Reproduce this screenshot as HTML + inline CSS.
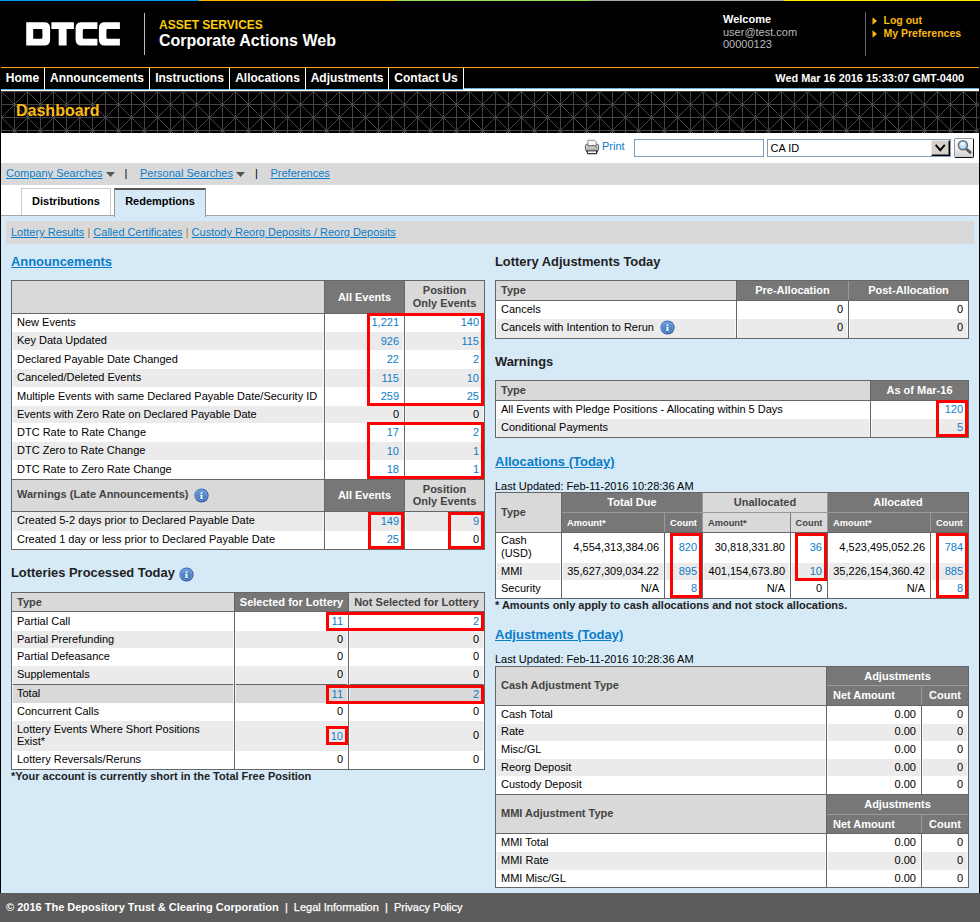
<!DOCTYPE html>
<html><head><meta charset="utf-8"><title>Dashboard</title>
<style>
html,body{margin:0;padding:0;}
body{width:980px;height:922px;position:relative;overflow:hidden;background:#000;font-family:"Liberation Sans",sans-serif;font-size:11px;color:#000;}
div{position:absolute;box-sizing:border-box;white-space:nowrap;}
.t{overflow:visible;}
.r{text-align:right;}
.c{text-align:center;}
.b{font-weight:bold;}
.lk{color:#0b7dc8;}
.ul{color:#0b7dc8;text-decoration:underline;}
.h13{font-size:13px;font-weight:bold;color:#222;}
.hd{font-weight:bold;color:#fff;}
.hl{font-weight:bold;color:#444;}
svg{position:absolute;left:0;top:0;display:block;}
</style></head><body>

<div style="left:1px;top:0px;width:978px;height:922px;background:#fff"></div>
<div style="left:0px;top:0px;width:980px;height:91px;background:#000"></div>
<div style="left:0px;top:0px;width:199px;height:1px;background:#00a0ea"></div>
<div style="left:199px;top:0px;width:197px;height:1px;background:#ffb400"></div>
<div style="left:396px;top:0px;width:194px;height:1px;background:#98df52"></div>
<div style="left:590px;top:0px;width:194px;height:1px;background:#a8a8a8"></div>
<div style="left:784px;top:0px;width:196px;height:1px;background:#ffec00"></div>
<div style="left:26px;top:22px;width:95px;height:24px"><svg width="95" height="24" viewBox="0 0 95 24">
<g fill="#fff">
<path d="M0.2 0.3H18.3Q24.1 0.3 24.1 6.1V17.7Q24.1 23.5 18.3 23.5H0.2Z M7.2 7V16.8H15.2Q16.4 16.8 16.4 15.6V8.2Q16.4 7 15.2 7Z" fill-rule="evenodd"/>
<path d="M25.4 0.3H47.9V7H40.6V23.5H32.7V7H25.4Z"/>
<path d="M71.4 0.3V7H58Q56.8 7 56.8 8.2V15.6Q56.8 16.8 58 16.8H71.4V23.5H55.4Q49.6 23.5 49.6 17.7V6.1Q49.6 0.3 55.4 0.3Z"/>
<path d="M93.9 0.3V7H81.6Q80.4 7 80.4 8.2V15.6Q80.4 16.8 81.6 16.8H93.9V23.5H78.7Q72.9 23.5 72.9 17.7V6.1Q72.9 0.3 78.7 0.3Z"/>
</g></svg></div>
<div style="left:144px;top:13px;width:1px;height:42px;background:#bbb"></div>
<div class="t" style="left:159px;top:18px;width:200px;height:14px;line-height:14px;font-size:12px;font-weight:bold;color:#fccd0a">ASSET SERVICES</div>
<div class="t" style="left:159px;top:31px;width:250px;height:20px;line-height:20px;font-size:16px;font-weight:bold;color:#fff">Corporate Actions Web</div>
<div class="t" style="left:723px;top:13px;width:150px;height:13px;line-height:13px;font-weight:bold;color:#fff;font-size:11px">Welcome</div>
<div class="t" style="left:723px;top:26px;width:150px;height:12px;line-height:12px;color:#bbb">user@test.com</div>
<div class="t" style="left:723px;top:38px;width:150px;height:12px;line-height:12px;color:#bbb">00000123</div>
<div style="left:865px;top:12px;width:1px;height:44px;background:#666"></div>
<div style="left:872px;top:17px;width:6px;height:8px"><svg width="6" height="8"><path d="M0.5 0.3L5 4L0.5 7.7z" fill="#fdb913"/></svg></div>
<div style="left:872px;top:30px;width:6px;height:8px"><svg width="6" height="8"><path d="M0.5 0.3L5 4L0.5 7.7z" fill="#fdb913"/></svg></div>
<div class="t" style="left:883.5px;top:14px;width:90px;height:12px;line-height:12px;font-size:10.5px;font-weight:bold;color:#fdb913">Log out</div>
<div class="t" style="left:883.5px;top:27px;width:90px;height:12px;line-height:12px;font-size:10.5px;font-weight:bold;color:#fdb913">My Preferences</div>
<div style="left:1px;top:67px;width:978px;height:1px;background:#f5a81c"></div>
<div style="left:1px;top:89px;width:463px;height:1px;background:#5eb0eb"></div>
<div style="left:1px;top:90px;width:978px;height:1px;background:#fff"></div>
<div style="left:464px;top:88px;width:515px;height:1px;background:#5eb0eb"></div>
<div style="left:464px;top:89px;width:515px;height:1px;background:#fff"></div>
<div class="t" style="left:1px;top:68px;width:43px;height:21px;line-height:21px;font-size:12px;font-weight:bold;color:#fff;text-align:center;line-height:20px">Home</div>
<div style="left:44px;top:68px;width:1px;height:22px;background:#fff"></div>
<div class="t" style="left:45px;top:68px;width:104px;height:21px;line-height:21px;font-size:12px;font-weight:bold;color:#fff;text-align:center;line-height:20px">Announcements</div>
<div style="left:149px;top:68px;width:1px;height:22px;background:#fff"></div>
<div class="t" style="left:150px;top:68px;width:79px;height:21px;line-height:21px;font-size:12px;font-weight:bold;color:#fff;text-align:center;line-height:20px">Instructions</div>
<div style="left:229px;top:68px;width:1px;height:22px;background:#fff"></div>
<div class="t" style="left:230px;top:68px;width:75px;height:21px;line-height:21px;font-size:12px;font-weight:bold;color:#fff;text-align:center;line-height:20px">Allocations</div>
<div style="left:305px;top:68px;width:1px;height:22px;background:#fff"></div>
<div class="t" style="left:306px;top:68px;width:82px;height:21px;line-height:21px;font-size:12px;font-weight:bold;color:#fff;text-align:center;line-height:20px">Adjustments</div>
<div style="left:388px;top:68px;width:1px;height:22px;background:#fff"></div>
<div class="t" style="left:389px;top:68px;width:74px;height:21px;line-height:21px;font-size:12px;font-weight:bold;color:#fff;text-align:center;line-height:20px">Contact Us</div>
<div style="left:463px;top:68px;width:1px;height:22px;background:#fff"></div>
<div class="t" style="left:700px;top:68px;width:264px;height:21px;line-height:21px;font-size:10.9px;font-weight:bold;color:#fff;text-align:right;line-height:20px">Wed Mar 16 2016 15:33:07 GMT-0400</div>
<div style="left:1px;top:91px;width:978px;height:42px;background:#000;overflow:hidden"><svg width="978" height="42"><path d="M0 0.5H978 M0 13.5H978 M0 26.5H978 M0 39.5H978 M0.5 0V42 M13.5 0V42 M26.5 0V42 M39.5 0V42 M52.5 0V42 M65.5 0V42 M78.5 0V42 M91.5 0V42 M104.5 0V42 M117.5 0V42 M130.5 0V42 M143.5 0V42 M156.5 0V42 M169.5 0V42 M182.5 0V42 M195.5 0V42 M208.5 0V42 M221.5 0V42 M234.5 0V42 M247.5 0V42 M260.5 0V42 M273.5 0V42 M286.5 0V42 M299.5 0V42 M312.5 0V42 M325.5 0V42 M338.5 0V42 M351.5 0V42 M364.5 0V42 M377.5 0V42 M390.5 0V42 M403.5 0V42 M416.5 0V42 M429.5 0V42 M442.5 0V42 M455.5 0V42 M468.5 0V42 M481.5 0V42 M494.5 0V42 M507.5 0V42 M520.5 0V42 M533.5 0V42 M546.5 0V42 M559.5 0V42 M572.5 0V42 M585.5 0V42 M598.5 0V42 M611.5 0V42 M624.5 0V42 M637.5 0V42 M650.5 0V42 M663.5 0V42 M676.5 0V42 M689.5 0V42 M702.5 0V42 M715.5 0V42 M728.5 0V42 M741.5 0V42 M754.5 0V42 M767.5 0V42 M780.5 0V42 M793.5 0V42 M806.5 0V42 M819.5 0V42 M832.5 0V42 M845.5 0V42 M858.5 0V42 M871.5 0V42 M884.5 0V42 M897.5 0V42 M910.5 0V42 M923.5 0V42 M936.5 0V42 M949.5 0V42 M962.5 0V42 M975.5 0V42 M-78 0L-36 42 M-51 0L-93 42 M-52 0L-10 42 M-25 0L-67 42 M-26 0L16 42 M1 0L-41 42 M0 0L42 42 M27 0L-15 42 M26 0L68 42 M53 0L11 42 M52 0L94 42 M79 0L37 42 M78 0L120 42 M105 0L63 42 M104 0L146 42 M131 0L89 42 M130 0L172 42 M157 0L115 42 M156 0L198 42 M183 0L141 42 M182 0L224 42 M209 0L167 42 M208 0L250 42 M235 0L193 42 M234 0L276 42 M261 0L219 42 M260 0L302 42 M287 0L245 42 M286 0L328 42 M313 0L271 42 M312 0L354 42 M339 0L297 42 M338 0L380 42 M365 0L323 42 M364 0L406 42 M391 0L349 42 M390 0L432 42 M417 0L375 42 M416 0L458 42 M443 0L401 42 M442 0L484 42 M469 0L427 42 M468 0L510 42 M495 0L453 42 M494 0L536 42 M521 0L479 42 M520 0L562 42 M547 0L505 42 M546 0L588 42 M573 0L531 42 M572 0L614 42 M599 0L557 42 M598 0L640 42 M625 0L583 42 M624 0L666 42 M651 0L609 42 M650 0L692 42 M677 0L635 42 M676 0L718 42 M703 0L661 42 M702 0L744 42 M729 0L687 42 M728 0L770 42 M755 0L713 42 M754 0L796 42 M781 0L739 42 M780 0L822 42 M807 0L765 42 M806 0L848 42 M833 0L791 42 M832 0L874 42 M859 0L817 42 M858 0L900 42 M885 0L843 42 M884 0L926 42 M911 0L869 42 M910 0L952 42 M937 0L895 42 M936 0L978 42 M963 0L921 42 M962 0L1004 42 M989 0L947 42 M988 0L1030 42 M1015 0L973 42 M1014 0L1056 42 M1041 0L999 42" stroke="#454545" stroke-width="1" fill="none"/></svg></div>
<div class="t" style="left:16px;top:101px;width:200px;height:20px;line-height:20px;font-size:16px;font-weight:bold;color:#fdb913">Dashboard</div>
<div style="left:584px;top:139px;width:16px;height:16px"><svg width="16" height="16" viewBox="0 0 16 16">
<defs><linearGradient id="pg" x1="0" y1="0" x2="0" y2="1"><stop offset="0" stop-color="#e4e4e4"/><stop offset="0.7" stop-color="#bdbdbd"/><stop offset="1" stop-color="#8e8e8e"/></linearGradient></defs>
<path d="M2.4 11.6L3.7 14.8H12.5L13.8 11.6Z" fill="#1c1c1c" stroke="#1c1c1c" stroke-width="0.8" stroke-linejoin="round"/>
<rect x="3.9" y="12.2" width="8.2" height="1.8" fill="#fff"/>
<rect x="1.4" y="5.2" width="13.2" height="6.6" rx="1.6" fill="url(#pg)" stroke="#5a5a5a" stroke-width="1"/>
<path d="M3.9 6.6V1.3H10.9L12.2 2.6V6.6Z" fill="#fff" stroke="#808080" stroke-width="0.9"/>
<path d="M3.4 6.8H12.7" stroke="#6a6a6a" stroke-width="0.9"/>
<circle cx="12.4" cy="8.5" r="0.75" fill="#1fa35a"/>
</svg></div>
<div class="t" style="left:602px;top:139px;width:30px;height:14px;line-height:14px;color:#0b7dc8">Print</div>
<div style="left:634px;top:139px;width:130px;height:18px;background:#fff;border:1px solid #7f9db9"></div>
<div style="left:767px;top:139px;width:184px;height:18px;background:#fff;border:1px solid #7f9db9"></div>
<div class="t" style="left:770.5px;top:140px;width:100px;height:16px;line-height:16px;font-size:11px">CA ID</div>
<div style="left:931px;top:140px;width:19px;height:16px;background:#d6d2ca;border:1px solid #000;border-top-color:#ece9e2;border-left-color:#ece9e2;box-shadow:inset -1px -1px 0 #6e6e6e"><svg width="17" height="14"><path d="M3.7 3.9L8.2 9.2L12.8 3.9" stroke="#000" stroke-width="1.9" fill="none"/></svg></div>
<div style="left:954px;top:138px;width:20px;height:20px;background:linear-gradient(#ffffff,#f2f2f2 45%,#cfcfcf);border:1px solid #111;border-top-color:#9a9a9a;border-left-color:#9a9a9a;border-radius:2px"><svg width="18" height="18" viewBox="0 0 18 18">
<defs><radialGradient id="lg" cx="0.45" cy="0.35" r="0.7"><stop offset="0" stop-color="#ffffff"/><stop offset="0.45" stop-color="#bfe0ff"/><stop offset="1" stop-color="#8fc4f5"/></radialGradient></defs>
<line x1="11.6" y1="10.2" x2="15.2" y2="13.4" stroke="#555" stroke-width="2.8" stroke-linecap="round"/>
<circle cx="7.9" cy="6.3" r="4.5" fill="url(#lg)" stroke="#6a6a6a" stroke-width="1.5"/></svg></div>
<div style="left:1px;top:163px;width:978px;height:22px;background:#d9d9d9"></div>
<div class="t" style="left:6px;top:166px;width:100px;height:14px;line-height:14px;"><span class="ul">Company Searches</span></div>
<div style="left:106px;top:172px;width:10px;height:6px"><svg width="10" height="6"><path d="M0 0H9L4.5 5z" fill="#555"/></svg></div>
<div class="t" style="left:124.5px;top:166px;width:10px;height:14px;line-height:14px;">|</div>
<div class="t" style="left:140px;top:166px;width:100px;height:14px;line-height:14px;"><span class="ul">Personal Searches</span></div>
<div style="left:236px;top:172px;width:10px;height:6px"><svg width="10" height="6"><path d="M0 0H9L4.5 5z" fill="#555"/></svg></div>
<div class="t" style="left:255px;top:166px;width:10px;height:14px;line-height:14px;">|</div>
<div class="t" style="left:270.5px;top:166px;width:100px;height:14px;line-height:14px;"><span class="ul">Preferences</span></div>
<div style="left:1px;top:215px;width:978px;height:678px;background:#d5e9f7;border-top:1px solid #a6a6a6"></div>
<div style="left:21px;top:188px;width:90px;height:27px;background:#fff;border:1px solid #ccc;border-bottom:none"></div>
<div class="t" style="left:21px;top:188px;width:90px;height:27px;line-height:27px;font-weight:bold;text-align:center">Distributions</div>
<div style="left:114px;top:188px;width:92px;height:29px;background:#d5e9f7;border:1px solid #999;border-top:2px solid #555;border-bottom:none"></div>
<div class="t" style="left:114px;top:188px;width:92px;height:27px;line-height:27px;font-weight:bold;text-align:center">Redemptions</div>
<div style="left:6px;top:221px;width:968px;height:23px;background:#d9d9d9"></div>
<div class="t" style="left:11px;top:225px;width:600px;height:14px;line-height:14px;"><span class="ul">Lottery Results</span> <span style="color:#a67c2e">|</span> <span class="ul">Called Certificates</span> <span style="color:#a67c2e">|</span> <span class="ul">Custody Reorg Deposits / Reorg Deposits</span></div>
<div class="t" style="left:11px;top:254px;width:200px;height:16px;line-height:16px;"><span class="ul" style="font-size:12.9px;font-weight:bold">Announcements</span></div>
<div style="left:11px;top:280px;width:474px;height:270px;border:1px solid #666666;background:#fff"></div>
<div style="left:12px;top:281px;width:312px;height:32px;background:#d9d9d9"></div>
<div style="left:325px;top:281px;width:79px;height:32px;background:#777777"></div>
<div style="left:405px;top:281px;width:79px;height:32px;background:#d9d9d9"></div>
<div style="left:12px;top:313px;width:472px;height:1px;background:#666666"></div>
<div class="t" style="left:325px;top:281px;width:79px;height:32px;line-height:32px;text-align:center;font-weight:bold;color:#fff;">All Events</div>
<div class="t" style="left:405px;top:284px;width:79px;height:13px;line-height:13px;text-align:center;font-weight:bold;color:#444;">Position</div>
<div class="t" style="left:405px;top:297px;width:79px;height:13px;line-height:13px;text-align:center;font-weight:bold;color:#444;">Only Events</div>
<div class="t" style="left:17px;top:313px;width:307px;height:18px;line-height:18px;">New Events</div>
<div class="t" style="left:325px;top:313px;width:74px;height:18px;line-height:18px;text-align:right;"><span class="lk">1,221</span></div>
<div class="t" style="left:405px;top:313px;width:74px;height:18px;line-height:18px;text-align:right;"><span class="lk">140</span></div>
<div style="left:12px;top:332px;width:472px;height:18px;background:#ebebeb"></div>
<div class="t" style="left:17px;top:331px;width:307px;height:18px;line-height:18px;">Key Data Updated</div>
<div class="t" style="left:325px;top:332px;width:74px;height:18px;line-height:18px;text-align:right;"><span class="lk">926</span></div>
<div class="t" style="left:405px;top:332px;width:74px;height:18px;line-height:18px;text-align:right;"><span class="lk">115</span></div>
<div class="t" style="left:17px;top:350px;width:307px;height:18px;line-height:18px;">Declared Payable Date Changed</div>
<div class="t" style="left:325px;top:350px;width:74px;height:18px;line-height:18px;text-align:right;"><span class="lk">22</span></div>
<div class="t" style="left:405px;top:350px;width:74px;height:18px;line-height:18px;text-align:right;"><span class="lk">2</span></div>
<div style="left:12px;top:369px;width:472px;height:18px;background:#ebebeb"></div>
<div class="t" style="left:17px;top:368px;width:307px;height:18px;line-height:18px;">Canceled/Deleted Events</div>
<div class="t" style="left:325px;top:369px;width:74px;height:18px;line-height:18px;text-align:right;"><span class="lk">115</span></div>
<div class="t" style="left:405px;top:369px;width:74px;height:18px;line-height:18px;text-align:right;"><span class="lk">10</span></div>
<div class="t" style="left:17px;top:387px;width:307px;height:18px;line-height:18px;">Multiple Events with same Declared Payable Date/Security ID</div>
<div class="t" style="left:325px;top:387px;width:74px;height:18px;line-height:18px;text-align:right;"><span class="lk">259</span></div>
<div class="t" style="left:405px;top:387px;width:74px;height:18px;line-height:18px;text-align:right;"><span class="lk">25</span></div>
<div style="left:12px;top:406px;width:472px;height:17px;background:#ebebeb"></div>
<div class="t" style="left:17px;top:405px;width:307px;height:18px;line-height:18px;">Events with Zero Rate on Declared Payable Date</div>
<div class="t" style="left:325px;top:405px;width:74px;height:18px;line-height:18px;text-align:right;">0</div>
<div class="t" style="left:405px;top:405px;width:74px;height:18px;line-height:18px;text-align:right;">0</div>
<div class="t" style="left:17px;top:423px;width:307px;height:18px;line-height:18px;">DTC Rate to Rate Change</div>
<div class="t" style="left:325px;top:423px;width:74px;height:18px;line-height:18px;text-align:right;"><span class="lk">17</span></div>
<div class="t" style="left:405px;top:423px;width:74px;height:18px;line-height:18px;text-align:right;"><span class="lk">2</span></div>
<div style="left:12px;top:442px;width:472px;height:18px;background:#ebebeb"></div>
<div class="t" style="left:17px;top:441px;width:307px;height:18px;line-height:18px;">DTC Zero to Rate Change</div>
<div class="t" style="left:325px;top:442px;width:74px;height:18px;line-height:18px;text-align:right;"><span class="lk">10</span></div>
<div class="t" style="left:405px;top:442px;width:74px;height:18px;line-height:18px;text-align:right;"><span class="lk">1</span></div>
<div class="t" style="left:17px;top:460px;width:307px;height:18px;line-height:18px;">DTC Rate to Zero Rate Change</div>
<div class="t" style="left:325px;top:460px;width:74px;height:18px;line-height:18px;text-align:right;"><span class="lk">18</span></div>
<div class="t" style="left:405px;top:460px;width:74px;height:18px;line-height:18px;text-align:right;"><span class="lk">1</span></div>
<div style="left:12px;top:479px;width:312px;height:32px;background:#d9d9d9"></div>
<div style="left:325px;top:479px;width:79px;height:32px;background:#777777"></div>
<div style="left:405px;top:479px;width:79px;height:32px;background:#d9d9d9"></div>
<div style="left:12px;top:479px;width:472px;height:1px;background:#666666"></div>
<div style="left:12px;top:511px;width:472px;height:1px;background:#666666"></div>
<div class="t" style="left:17px;top:478px;width:307px;height:32px;line-height:32px;font-weight:bold;color:#444;">Warnings (Late Announcements)</div>
<div style="left:194.1px;top:488.4px;width:15px;height:15px"><svg class="info" width="15" height="15" viewBox="0 0 15 15"><defs><linearGradient id="ig1" x1="0" y1="0" x2="1" y2="1"><stop offset="0" stop-color="#3f7bd0"/><stop offset="1" stop-color="#1c3a8c"/></linearGradient><linearGradient id="ig2" x1="0" y1="0" x2="0" y2="1"><stop offset="0" stop-color="#6d9bd3"/><stop offset="1" stop-color="#3c72bb"/></linearGradient></defs><circle cx="7.5" cy="7.5" r="7.1" fill="url(#ig1)"/><circle cx="7.5" cy="7.5" r="6.1" fill="#8db1de"/><circle cx="7.5" cy="7.5" r="5.4" fill="url(#ig2)"/><path d="M6.6 4.3h1.8v1.5H6.6z M6.1 6.7h2.3v3.2h0.9v0.9H5.7v-0.9h0.9V7.5H6.1z" fill="#fff"/></svg></div>
<div class="t" style="left:325px;top:480px;width:79px;height:31px;line-height:31px;text-align:center;font-weight:bold;color:#fff;">All Events</div>
<div class="t" style="left:405px;top:483px;width:79px;height:13px;line-height:13px;text-align:center;font-weight:bold;color:#444;">Position</div>
<div class="t" style="left:405px;top:495px;width:79px;height:13px;line-height:13px;text-align:center;font-weight:bold;color:#444;">Only Events</div>
<div style="left:12px;top:512px;width:472px;height:19px;background:#ebebeb"></div>
<div class="t" style="left:17px;top:511px;width:307px;height:19px;line-height:19px;">Created 5-2 days prior to Declared Payable Date</div>
<div class="t" style="left:17px;top:530px;width:307px;height:18px;line-height:18px;">Created 1 day or less prior to Declared Payable Date</div>
<div class="t" style="left:325px;top:512px;width:74px;height:19px;line-height:19px;text-align:right;"><span class="lk">149</span></div>
<div class="t" style="left:405px;top:512px;width:74px;height:19px;line-height:19px;text-align:right;"><span class="lk">9</span></div>
<div class="t" style="left:325px;top:530px;width:74px;height:18px;line-height:18px;text-align:right;"><span class="lk">25</span></div>
<div class="t" style="left:405px;top:530px;width:74px;height:18px;line-height:18px;text-align:right;">0</div>
<div style="left:12px;top:314px;width:1px;height:165px;background:rgba(255,255,255,0.6)"></div>
<div style="left:323px;top:314px;width:1px;height:165px;background:rgba(255,255,255,0.6)"></div>
<div style="left:325px;top:314px;width:1px;height:165px;background:rgba(255,255,255,0.6)"></div>
<div style="left:403px;top:314px;width:1px;height:165px;background:rgba(255,255,255,0.6)"></div>
<div style="left:405px;top:314px;width:1px;height:165px;background:rgba(255,255,255,0.6)"></div>
<div style="left:483px;top:314px;width:1px;height:165px;background:rgba(255,255,255,0.6)"></div>
<div style="left:12px;top:512px;width:1px;height:37px;background:rgba(255,255,255,0.6)"></div>
<div style="left:323px;top:512px;width:1px;height:37px;background:rgba(255,255,255,0.6)"></div>
<div style="left:325px;top:512px;width:1px;height:37px;background:rgba(255,255,255,0.6)"></div>
<div style="left:403px;top:512px;width:1px;height:37px;background:rgba(255,255,255,0.6)"></div>
<div style="left:405px;top:512px;width:1px;height:37px;background:rgba(255,255,255,0.6)"></div>
<div style="left:483px;top:512px;width:1px;height:37px;background:rgba(255,255,255,0.6)"></div>
<div style="left:324px;top:281px;width:1px;height:268px;background:#666666"></div>
<div style="left:404px;top:281px;width:1px;height:268px;background:#666666"></div>
<div style="left:367px;top:313px;width:117px;height:93px;border:3px solid #fe0000"></div>
<div style="left:367px;top:422px;width:117px;height:57px;border:3px solid #fe0000"></div>
<div style="left:368px;top:512px;width:36px;height:37px;border:3px solid #fe0000"></div>
<div style="left:448px;top:512px;width:36px;height:37px;border:3px solid #fe0000"></div>
<div class="t" style="left:11px;top:565px;width:250px;height:16px;line-height:16px;font-size:12.9px;font-weight:bold;color:#222">Lotteries Processed Today</div>
<div style="left:178.6px;top:566.6px;width:15px;height:15px"><svg class="info" width="15" height="15" viewBox="0 0 15 15"><defs><linearGradient id="ig1" x1="0" y1="0" x2="1" y2="1"><stop offset="0" stop-color="#3f7bd0"/><stop offset="1" stop-color="#1c3a8c"/></linearGradient><linearGradient id="ig2" x1="0" y1="0" x2="0" y2="1"><stop offset="0" stop-color="#6d9bd3"/><stop offset="1" stop-color="#3c72bb"/></linearGradient></defs><circle cx="7.5" cy="7.5" r="7.1" fill="url(#ig1)"/><circle cx="7.5" cy="7.5" r="6.1" fill="#8db1de"/><circle cx="7.5" cy="7.5" r="5.4" fill="url(#ig2)"/><path d="M6.6 4.3h1.8v1.5H6.6z M6.1 6.7h2.3v3.2h0.9v0.9H5.7v-0.9h0.9V7.5H6.1z" fill="#fff"/></svg></div>
<div style="left:11px;top:592px;width:474px;height:178px;border:1px solid #666666;background:#fff"></div>
<div style="left:12px;top:593px;width:222px;height:18px;background:#d9d9d9"></div>
<div style="left:235px;top:593px;width:113px;height:18px;background:#777777"></div>
<div style="left:349px;top:593px;width:135px;height:18px;background:#d9d9d9"></div>
<div style="left:12px;top:611px;width:472px;height:1px;background:#666666"></div>
<div class="t" style="left:17px;top:593px;width:217px;height:18px;line-height:18px;font-weight:bold;color:#444;">Type</div>
<div class="t" style="left:235px;top:593px;width:113px;height:18px;line-height:18px;text-align:center;font-weight:bold;color:#fff;">Selected for Lottery</div>
<div class="t" style="left:349px;top:593px;width:135px;height:18px;line-height:18px;text-align:center;font-weight:bold;color:#444;">Not Selected for Lottery</div>
<div class="t" style="left:17px;top:612px;width:217px;height:19px;line-height:19px;">Partial Call</div>
<div class="t" style="left:235px;top:612px;width:108px;height:19px;line-height:19px;text-align:right;"><span class="lk">11</span></div>
<div class="t" style="left:349px;top:612px;width:130px;height:19px;line-height:19px;text-align:right;"><span class="lk">2</span></div>
<div style="left:12px;top:631px;width:472px;height:17px;background:#ebebeb"></div>
<div class="t" style="left:17px;top:631px;width:217px;height:17px;line-height:17px;">Partial Prerefunding</div>
<div class="t" style="left:235px;top:631px;width:108px;height:17px;line-height:17px;text-align:right;">0</div>
<div class="t" style="left:349px;top:631px;width:130px;height:17px;line-height:17px;text-align:right;">0</div>
<div class="t" style="left:17px;top:647px;width:217px;height:18px;line-height:18px;">Partial Defeasance</div>
<div class="t" style="left:235px;top:647px;width:108px;height:18px;line-height:18px;text-align:right;">0</div>
<div class="t" style="left:349px;top:647px;width:130px;height:18px;line-height:18px;text-align:right;">0</div>
<div style="left:12px;top:666px;width:472px;height:19px;background:#ebebeb"></div>
<div class="t" style="left:17px;top:665px;width:217px;height:19px;line-height:19px;">Supplementals</div>
<div class="t" style="left:235px;top:665px;width:108px;height:19px;line-height:19px;text-align:right;">0</div>
<div class="t" style="left:349px;top:665px;width:130px;height:19px;line-height:19px;text-align:right;">0</div>
<div style="left:12px;top:685px;width:472px;height:18px;background:#d9d9d9"></div>
<div style="left:12px;top:684px;width:472px;height:1px;background:#666666"></div>
<div class="t" style="left:17px;top:684px;width:217px;height:19px;line-height:19px;">Total</div>
<div class="t" style="left:235px;top:685px;width:108px;height:19px;line-height:19px;text-align:right;"><span class="lk">11</span></div>
<div class="t" style="left:349px;top:685px;width:130px;height:19px;line-height:19px;text-align:right;"><span class="lk">2</span></div>
<div class="t" style="left:17px;top:703px;width:217px;height:17px;line-height:17px;">Concurrent Calls</div>
<div class="t" style="left:235px;top:703px;width:108px;height:17px;line-height:17px;text-align:right;">0</div>
<div class="t" style="left:349px;top:703px;width:130px;height:17px;line-height:17px;text-align:right;">0</div>
<div style="left:12px;top:721px;width:472px;height:30px;background:#ebebeb"></div>
<div class="t" style="left:17px;top:723px;width:220px;height:13px;line-height:13px;">Lottery Events Where Short Positions</div>
<div class="t" style="left:17px;top:735px;width:220px;height:13px;line-height:13px;">Exist*</div>
<div class="t" style="left:235px;top:721px;width:108px;height:30px;line-height:30px;text-align:right;"><span class="lk">10</span></div>
<div class="t" style="left:349px;top:720px;width:130px;height:30px;line-height:30px;text-align:right;">0</div>
<div class="t" style="left:17px;top:750px;width:217px;height:18px;line-height:18px;">Lottery Reversals/Reruns</div>
<div class="t" style="left:235px;top:750px;width:108px;height:18px;line-height:18px;text-align:right;">0</div>
<div class="t" style="left:349px;top:750px;width:130px;height:18px;line-height:18px;text-align:right;">0</div>
<div style="left:12px;top:612px;width:1px;height:157px;background:rgba(255,255,255,0.6)"></div>
<div style="left:233px;top:612px;width:1px;height:157px;background:rgba(255,255,255,0.6)"></div>
<div style="left:235px;top:612px;width:1px;height:157px;background:rgba(255,255,255,0.6)"></div>
<div style="left:347px;top:612px;width:1px;height:157px;background:rgba(255,255,255,0.6)"></div>
<div style="left:349px;top:612px;width:1px;height:157px;background:rgba(255,255,255,0.6)"></div>
<div style="left:483px;top:612px;width:1px;height:157px;background:rgba(255,255,255,0.6)"></div>
<div style="left:234px;top:593px;width:1px;height:176px;background:#666666"></div>
<div style="left:348px;top:593px;width:1px;height:176px;background:#666666"></div>
<div style="left:326px;top:612px;width:158px;height:19px;border:3px solid #fe0000"></div>
<div style="left:326px;top:685px;width:158px;height:19px;border:3px solid #fe0000"></div>
<div style="left:326px;top:726px;width:22px;height:19px;border:3px solid #fe0000"></div>
<div class="t" style="left:11px;top:769px;width:400px;height:14px;line-height:14px;font-weight:bold;color:#222">*Your account is currently short in the Total Free Position</div>
<div class="t" style="left:495px;top:254px;width:250px;height:16px;line-height:16px;font-size:12.9px;font-weight:bold;color:#222">Lottery Adjustments Today</div>
<div style="left:495px;top:280px;width:474px;height:59px;border:1px solid #666666;background:#fff"></div>
<div style="left:496px;top:281px;width:240px;height:19px;background:#d9d9d9"></div>
<div style="left:737px;top:281px;width:231px;height:19px;background:#777777"></div>
<div style="left:496px;top:300px;width:472px;height:1px;background:#666666"></div>
<div style="left:848px;top:281px;width:1px;height:19px;background:#999"></div>
<div class="t" style="left:501px;top:281px;width:235px;height:19px;line-height:19px;font-weight:bold;color:#444;">Type</div>
<div class="t" style="left:737px;top:281px;width:111px;height:19px;line-height:19px;text-align:center;font-weight:bold;color:#fff;">Pre-Allocation</div>
<div class="t" style="left:849px;top:281px;width:119px;height:19px;line-height:19px;text-align:center;font-weight:bold;color:#fff;">Post-Allocation</div>
<div style="left:496px;top:319px;width:472px;height:19px;background:#ebebeb"></div>
<div class="t" style="left:501px;top:300px;width:235px;height:18px;line-height:18px;">Cancels</div>
<div class="t" style="left:501px;top:318px;width:235px;height:19px;line-height:19px;">Cancels with Intention to Rerun</div>
<div style="left:659.5px;top:320.4px;width:15px;height:15px"><svg class="info" width="15" height="15" viewBox="0 0 15 15"><defs><linearGradient id="ig1" x1="0" y1="0" x2="1" y2="1"><stop offset="0" stop-color="#3f7bd0"/><stop offset="1" stop-color="#1c3a8c"/></linearGradient><linearGradient id="ig2" x1="0" y1="0" x2="0" y2="1"><stop offset="0" stop-color="#6d9bd3"/><stop offset="1" stop-color="#3c72bb"/></linearGradient></defs><circle cx="7.5" cy="7.5" r="7.1" fill="url(#ig1)"/><circle cx="7.5" cy="7.5" r="6.1" fill="#8db1de"/><circle cx="7.5" cy="7.5" r="5.4" fill="url(#ig2)"/><path d="M6.6 4.3h1.8v1.5H6.6z M6.1 6.7h2.3v3.2h0.9v0.9H5.7v-0.9h0.9V7.5H6.1z" fill="#fff"/></svg></div>
<div class="t" style="left:737px;top:300px;width:106px;height:18px;line-height:18px;text-align:right;">0</div>
<div class="t" style="left:849px;top:300px;width:114px;height:18px;line-height:18px;text-align:right;">0</div>
<div class="t" style="left:737px;top:318px;width:106px;height:19px;line-height:19px;text-align:right;">0</div>
<div class="t" style="left:849px;top:318px;width:114px;height:19px;line-height:19px;text-align:right;">0</div>
<div style="left:496px;top:301px;width:1px;height:37px;background:rgba(255,255,255,0.6)"></div>
<div style="left:735px;top:301px;width:1px;height:37px;background:rgba(255,255,255,0.6)"></div>
<div style="left:737px;top:301px;width:1px;height:37px;background:rgba(255,255,255,0.6)"></div>
<div style="left:847px;top:301px;width:1px;height:37px;background:rgba(255,255,255,0.6)"></div>
<div style="left:849px;top:301px;width:1px;height:37px;background:rgba(255,255,255,0.6)"></div>
<div style="left:967px;top:301px;width:1px;height:37px;background:rgba(255,255,255,0.6)"></div>
<div style="left:736px;top:281px;width:1px;height:57px;background:#666666"></div>
<div style="left:848px;top:301px;width:1px;height:37px;background:#666666"></div>
<div class="t" style="left:495px;top:354px;width:250px;height:16px;line-height:16px;font-size:12.9px;font-weight:bold;color:#222">Warnings</div>
<div style="left:495px;top:380px;width:474px;height:58px;border:1px solid #666666;background:#fff"></div>
<div style="left:496px;top:381px;width:374px;height:19px;background:#d9d9d9"></div>
<div style="left:871px;top:381px;width:97px;height:19px;background:#777777"></div>
<div style="left:496px;top:400px;width:472px;height:1px;background:#666666"></div>
<div class="t" style="left:501px;top:381px;width:369px;height:19px;line-height:19px;font-weight:bold;color:#444;">Type</div>
<div class="t" style="left:871px;top:381px;width:97px;height:19px;line-height:19px;text-align:center;font-weight:bold;color:#fff;">As of Mar-16</div>
<div style="left:496px;top:419px;width:472px;height:18px;background:#ebebeb"></div>
<div class="t" style="left:501px;top:400px;width:369px;height:18px;line-height:18px;">All Events with Pledge Positions - Allocating within 5 Days</div>
<div class="t" style="left:501px;top:418px;width:369px;height:18px;line-height:18px;">Conditional Payments</div>
<div class="t" style="left:871px;top:400px;width:92px;height:18px;line-height:18px;text-align:right;"><span class="lk">120</span></div>
<div class="t" style="left:871px;top:418px;width:92px;height:18px;line-height:18px;text-align:right;"><span class="lk">5</span></div>
<div style="left:496px;top:401px;width:1px;height:36px;background:rgba(255,255,255,0.6)"></div>
<div style="left:869px;top:401px;width:1px;height:36px;background:rgba(255,255,255,0.6)"></div>
<div style="left:871px;top:401px;width:1px;height:36px;background:rgba(255,255,255,0.6)"></div>
<div style="left:967px;top:401px;width:1px;height:36px;background:rgba(255,255,255,0.6)"></div>
<div style="left:870px;top:381px;width:1px;height:56px;background:#666666"></div>
<div style="left:936px;top:400px;width:32px;height:37px;border:3px solid #fe0000"></div>
<div class="t" style="left:495px;top:454px;width:250px;height:16px;line-height:16px;"><span class="ul" style="font-size:13px;font-weight:bold">Allocations (Today)</span></div>
<div class="t" style="left:495px;top:480px;width:300px;height:13px;line-height:13px;">Last Updated: Feb-11-2016 10:28:36 AM</div>
<div style="left:495px;top:492px;width:474px;height:107px;border:1px solid #666666;background:#fff"></div>
<div style="left:496px;top:493px;width:65px;height:39px;background:#d9d9d9"></div>
<div style="left:562px;top:493px;width:140px;height:39px;background:#777777"></div>
<div style="left:703px;top:493px;width:124px;height:39px;background:#d9d9d9"></div>
<div style="left:828px;top:493px;width:140px;height:39px;background:#777777"></div>
<div style="left:562px;top:512px;width:140px;height:1px;background:#999"></div>
<div style="left:703px;top:512px;width:124px;height:1px;background:#999"></div>
<div style="left:828px;top:512px;width:140px;height:1px;background:#999"></div>
<div style="left:664px;top:513px;width:1px;height:19px;background:#999"></div>
<div style="left:790px;top:513px;width:1px;height:19px;background:#777"></div>
<div style="left:930px;top:513px;width:1px;height:19px;background:#999"></div>
<div style="left:702px;top:493px;width:1px;height:39px;background:#999"></div>
<div style="left:827px;top:493px;width:1px;height:39px;background:#999"></div>
<div style="left:496px;top:532px;width:472px;height:1px;background:#666666"></div>
<div class="t" style="left:501px;top:493px;width:60px;height:39px;line-height:39px;font-weight:bold;color:#444;">Type</div>
<div class="t" style="left:562px;top:493px;width:140px;height:19px;line-height:19px;text-align:center;font-weight:bold;color:#fff;">Total Due</div>
<div class="t" style="left:703px;top:493px;width:124px;height:19px;line-height:19px;text-align:center;font-weight:bold;color:#444;">Unallocated</div>
<div class="t" style="left:828px;top:493px;width:140px;height:19px;line-height:19px;text-align:center;font-weight:bold;color:#fff;">Allocated</div>
<div class="t" style="left:567px;top:514px;width:97px;height:19px;line-height:19px;font-weight:bold;color:#fff;font-size:9.3px;">Amount*</div>
<div class="t" style="left:665px;top:514px;width:37px;height:19px;line-height:19px;text-align:center;font-weight:bold;color:#fff;font-size:9.3px;">Count</div>
<div class="t" style="left:708px;top:514px;width:82px;height:19px;line-height:19px;font-weight:bold;color:#444;font-size:9.3px;">Amount*</div>
<div class="t" style="left:791px;top:514px;width:36px;height:19px;line-height:19px;text-align:center;font-weight:bold;color:#444;font-size:9.3px;">Count</div>
<div class="t" style="left:833px;top:514px;width:97px;height:19px;line-height:19px;font-weight:bold;color:#fff;font-size:9.3px;">Amount*</div>
<div class="t" style="left:931px;top:514px;width:37px;height:19px;line-height:19px;text-align:center;font-weight:bold;color:#fff;font-size:9.3px;">Count</div>
<div style="left:496px;top:563px;width:472px;height:17px;background:#ebebeb"></div>
<div class="t" style="left:501px;top:534px;width:60px;height:13px;line-height:13px;">Cash</div>
<div class="t" style="left:501px;top:547px;width:60px;height:13px;line-height:13px;">(USD)</div>
<div class="t" style="left:501px;top:563px;width:60px;height:17px;line-height:17px;">MMI</div>
<div class="t" style="left:501px;top:579px;width:60px;height:18px;line-height:18px;">Security</div>
<div class="t" style="left:562px;top:532px;width:97px;height:30px;line-height:30px;text-align:right;">4,554,313,384.06</div>
<div class="t" style="left:665px;top:532px;width:32px;height:30px;line-height:30px;text-align:right;"><span class="lk">820</span></div>
<div class="t" style="left:703px;top:532px;width:82px;height:30px;line-height:30px;text-align:right;">30,818,331.80</div>
<div class="t" style="left:791px;top:532px;width:31px;height:30px;line-height:30px;text-align:right;"><span class="lk">36</span></div>
<div class="t" style="left:828px;top:532px;width:97px;height:30px;line-height:30px;text-align:right;">4,523,495,052.26</div>
<div class="t" style="left:931px;top:532px;width:32px;height:30px;line-height:30px;text-align:right;"><span class="lk">784</span></div>
<div class="t" style="left:562px;top:563px;width:97px;height:17px;line-height:17px;text-align:right;">35,627,309,034.22</div>
<div class="t" style="left:665px;top:563px;width:32px;height:17px;line-height:17px;text-align:right;"><span class="lk">895</span></div>
<div class="t" style="left:703px;top:563px;width:82px;height:17px;line-height:17px;text-align:right;">401,154,673.80</div>
<div class="t" style="left:791px;top:563px;width:31px;height:17px;line-height:17px;text-align:right;"><span class="lk">10</span></div>
<div class="t" style="left:828px;top:563px;width:97px;height:17px;line-height:17px;text-align:right;">35,226,154,360.42</div>
<div class="t" style="left:931px;top:563px;width:32px;height:17px;line-height:17px;text-align:right;"><span class="lk">885</span></div>
<div class="t" style="left:562px;top:579px;width:97px;height:18px;line-height:18px;text-align:right;">N/A</div>
<div class="t" style="left:665px;top:579px;width:32px;height:18px;line-height:18px;text-align:right;"><span class="lk">8</span></div>
<div class="t" style="left:703px;top:579px;width:82px;height:18px;line-height:18px;text-align:right;">N/A</div>
<div class="t" style="left:791px;top:579px;width:31px;height:18px;line-height:18px;text-align:right;">0</div>
<div class="t" style="left:828px;top:579px;width:97px;height:18px;line-height:18px;text-align:right;">N/A</div>
<div class="t" style="left:931px;top:579px;width:32px;height:18px;line-height:18px;text-align:right;"><span class="lk">8</span></div>
<div style="left:496px;top:533px;width:1px;height:65px;background:rgba(255,255,255,0.6)"></div>
<div style="left:560px;top:533px;width:1px;height:65px;background:rgba(255,255,255,0.6)"></div>
<div style="left:562px;top:533px;width:1px;height:65px;background:rgba(255,255,255,0.6)"></div>
<div style="left:663px;top:533px;width:1px;height:65px;background:rgba(255,255,255,0.6)"></div>
<div style="left:665px;top:533px;width:1px;height:65px;background:rgba(255,255,255,0.6)"></div>
<div style="left:701px;top:533px;width:1px;height:65px;background:rgba(255,255,255,0.6)"></div>
<div style="left:703px;top:533px;width:1px;height:65px;background:rgba(255,255,255,0.6)"></div>
<div style="left:789px;top:533px;width:1px;height:65px;background:rgba(255,255,255,0.6)"></div>
<div style="left:791px;top:533px;width:1px;height:65px;background:rgba(255,255,255,0.6)"></div>
<div style="left:826px;top:533px;width:1px;height:65px;background:rgba(255,255,255,0.6)"></div>
<div style="left:828px;top:533px;width:1px;height:65px;background:rgba(255,255,255,0.6)"></div>
<div style="left:929px;top:533px;width:1px;height:65px;background:rgba(255,255,255,0.6)"></div>
<div style="left:931px;top:533px;width:1px;height:65px;background:rgba(255,255,255,0.6)"></div>
<div style="left:967px;top:533px;width:1px;height:65px;background:rgba(255,255,255,0.6)"></div>
<div style="left:561px;top:533px;width:1px;height:65px;background:#666666"></div>
<div style="left:664px;top:533px;width:1px;height:65px;background:#666666"></div>
<div style="left:702px;top:533px;width:1px;height:65px;background:#666666"></div>
<div style="left:790px;top:533px;width:1px;height:65px;background:#666666"></div>
<div style="left:827px;top:533px;width:1px;height:65px;background:#666666"></div>
<div style="left:930px;top:533px;width:1px;height:65px;background:#666666"></div>
<div style="left:561px;top:493px;width:1px;height:40px;background:#666666"></div>
<div style="left:670px;top:533px;width:32px;height:65px;border:3px solid #fe0000"></div>
<div style="left:795px;top:533px;width:32px;height:48px;border:3px solid #fe0000"></div>
<div style="left:936px;top:533px;width:32px;height:65px;border:3px solid #fe0000"></div>
<div class="t" style="left:495px;top:598px;width:480px;height:14px;line-height:14px;font-weight:bold;color:#222">* Amounts only apply to cash allocations and not stock allocations.</div>
<div class="t" style="left:495px;top:627px;width:250px;height:16px;line-height:16px;"><span class="ul" style="font-size:13px;font-weight:bold">Adjustments (Today)</span></div>
<div class="t" style="left:495px;top:653px;width:300px;height:13px;line-height:13px;">Last Updated: Feb-11-2016 10:28:36 AM</div>
<div style="left:495px;top:666px;width:474px;height:222px;border:1px solid #666666;background:#fff"></div>
<div style="left:496px;top:667px;width:330px;height:38px;background:#d9d9d9"></div>
<div style="left:827px;top:667px;width:141px;height:38px;background:#777777"></div>
<div style="left:827px;top:685px;width:141px;height:1px;background:#999"></div>
<div style="left:921px;top:686px;width:1px;height:19px;background:#999"></div>
<div style="left:496px;top:705px;width:472px;height:1px;background:#666666"></div>
<div class="t" style="left:501px;top:666px;width:325px;height:38px;line-height:38px;font-weight:bold;color:#444;">Cash Adjustment Type</div>
<div class="t" style="left:827px;top:667px;width:141px;height:18px;line-height:18px;text-align:center;font-weight:bold;color:#fff;">Adjustments</div>
<div class="t" style="left:833px;top:686px;width:88px;height:19px;line-height:19px;font-weight:bold;color:#fff;">Net Amount</div>
<div class="t" style="left:922px;top:686px;width:46px;height:19px;line-height:19px;text-align:center;font-weight:bold;color:#fff;">Count</div>
<div class="t" style="left:501px;top:705px;width:325px;height:18px;line-height:18px;">Cash Total</div>
<div class="t" style="left:827px;top:705px;width:89px;height:18px;line-height:18px;text-align:right;">0.00</div>
<div class="t" style="left:922px;top:705px;width:41px;height:18px;line-height:18px;text-align:right;">0</div>
<div style="left:496px;top:724px;width:472px;height:17px;background:#ebebeb"></div>
<div class="t" style="left:501px;top:723px;width:325px;height:17px;line-height:17px;">Rate</div>
<div class="t" style="left:827px;top:723px;width:89px;height:17px;line-height:17px;text-align:right;">0.00</div>
<div class="t" style="left:922px;top:723px;width:41px;height:17px;line-height:17px;text-align:right;">0</div>
<div class="t" style="left:501px;top:740px;width:325px;height:18px;line-height:18px;">Misc/GL</div>
<div class="t" style="left:827px;top:740px;width:89px;height:18px;line-height:18px;text-align:right;">0.00</div>
<div class="t" style="left:922px;top:740px;width:41px;height:18px;line-height:18px;text-align:right;">0</div>
<div style="left:496px;top:759px;width:472px;height:17px;background:#ebebeb"></div>
<div class="t" style="left:501px;top:759px;width:325px;height:17px;line-height:17px;">Reorg Deposit</div>
<div class="t" style="left:827px;top:759px;width:89px;height:17px;line-height:17px;text-align:right;">0.00</div>
<div class="t" style="left:922px;top:759px;width:41px;height:17px;line-height:17px;text-align:right;">0</div>
<div class="t" style="left:501px;top:775px;width:325px;height:18px;line-height:18px;">Custody Deposit</div>
<div class="t" style="left:827px;top:775px;width:89px;height:18px;line-height:18px;text-align:right;">0.00</div>
<div class="t" style="left:922px;top:775px;width:41px;height:18px;line-height:18px;text-align:right;">0</div>
<div style="left:496px;top:794px;width:472px;height:1px;background:#666666"></div>
<div style="left:496px;top:795px;width:330px;height:38px;background:#d9d9d9"></div>
<div style="left:827px;top:795px;width:141px;height:38px;background:#777777"></div>
<div style="left:827px;top:814px;width:141px;height:1px;background:#999"></div>
<div style="left:921px;top:815px;width:1px;height:18px;background:#999"></div>
<div style="left:496px;top:833px;width:472px;height:1px;background:#666666"></div>
<div class="t" style="left:501px;top:794px;width:325px;height:38px;line-height:38px;font-weight:bold;color:#444;">MMI Adjustment Type</div>
<div class="t" style="left:827px;top:795px;width:141px;height:19px;line-height:19px;text-align:center;font-weight:bold;color:#fff;">Adjustments</div>
<div class="t" style="left:833px;top:815px;width:88px;height:18px;line-height:18px;font-weight:bold;color:#fff;">Net Amount</div>
<div class="t" style="left:922px;top:815px;width:46px;height:18px;line-height:18px;text-align:center;font-weight:bold;color:#fff;">Count</div>
<div class="t" style="left:501px;top:833px;width:325px;height:18px;line-height:18px;">MMI Total</div>
<div class="t" style="left:827px;top:833px;width:89px;height:18px;line-height:18px;text-align:right;">0.00</div>
<div class="t" style="left:922px;top:833px;width:41px;height:18px;line-height:18px;text-align:right;">0</div>
<div style="left:496px;top:852px;width:472px;height:18px;background:#ebebeb"></div>
<div class="t" style="left:501px;top:851px;width:325px;height:18px;line-height:18px;">MMI Rate</div>
<div class="t" style="left:827px;top:851px;width:89px;height:18px;line-height:18px;text-align:right;">0.00</div>
<div class="t" style="left:922px;top:851px;width:41px;height:18px;line-height:18px;text-align:right;">0</div>
<div class="t" style="left:501px;top:870px;width:325px;height:17px;line-height:17px;">MMI Misc/GL</div>
<div class="t" style="left:827px;top:870px;width:89px;height:17px;line-height:17px;text-align:right;">0.00</div>
<div class="t" style="left:922px;top:870px;width:41px;height:17px;line-height:17px;text-align:right;">0</div>
<div style="left:496px;top:706px;width:1px;height:88px;background:rgba(255,255,255,0.6)"></div>
<div style="left:825px;top:706px;width:1px;height:88px;background:rgba(255,255,255,0.6)"></div>
<div style="left:827px;top:706px;width:1px;height:88px;background:rgba(255,255,255,0.6)"></div>
<div style="left:920px;top:706px;width:1px;height:88px;background:rgba(255,255,255,0.6)"></div>
<div style="left:922px;top:706px;width:1px;height:88px;background:rgba(255,255,255,0.6)"></div>
<div style="left:967px;top:706px;width:1px;height:88px;background:rgba(255,255,255,0.6)"></div>
<div style="left:496px;top:834px;width:1px;height:53px;background:rgba(255,255,255,0.6)"></div>
<div style="left:825px;top:834px;width:1px;height:53px;background:rgba(255,255,255,0.6)"></div>
<div style="left:827px;top:834px;width:1px;height:53px;background:rgba(255,255,255,0.6)"></div>
<div style="left:920px;top:834px;width:1px;height:53px;background:rgba(255,255,255,0.6)"></div>
<div style="left:922px;top:834px;width:1px;height:53px;background:rgba(255,255,255,0.6)"></div>
<div style="left:967px;top:834px;width:1px;height:53px;background:rgba(255,255,255,0.6)"></div>
<div style="left:826px;top:667px;width:1px;height:127px;background:#666666"></div>
<div style="left:921px;top:706px;width:1px;height:88px;background:#666666"></div>
<div style="left:826px;top:795px;width:1px;height:92px;background:#666666"></div>
<div style="left:921px;top:834px;width:1px;height:53px;background:#666666"></div>
<div style="left:0px;top:893px;width:980px;height:29px;background:#5c5c5c"></div>
<div class="t" style="left:6px;top:900px;width:700px;height:14px;line-height:14px;color:#fff"><b>© 2016 The Depository Trust &amp; Clearing Corporation</b><span style="-webkit-text-stroke:0.25px #fff"> &nbsp;|&nbsp; Legal Information &nbsp;|&nbsp; Privacy Policy</span></div>
<div style="left:0px;top:91px;width:1px;height:802px;background:#000"></div>
<div style="left:979px;top:91px;width:1px;height:802px;background:#000"></div>
</body></html>
